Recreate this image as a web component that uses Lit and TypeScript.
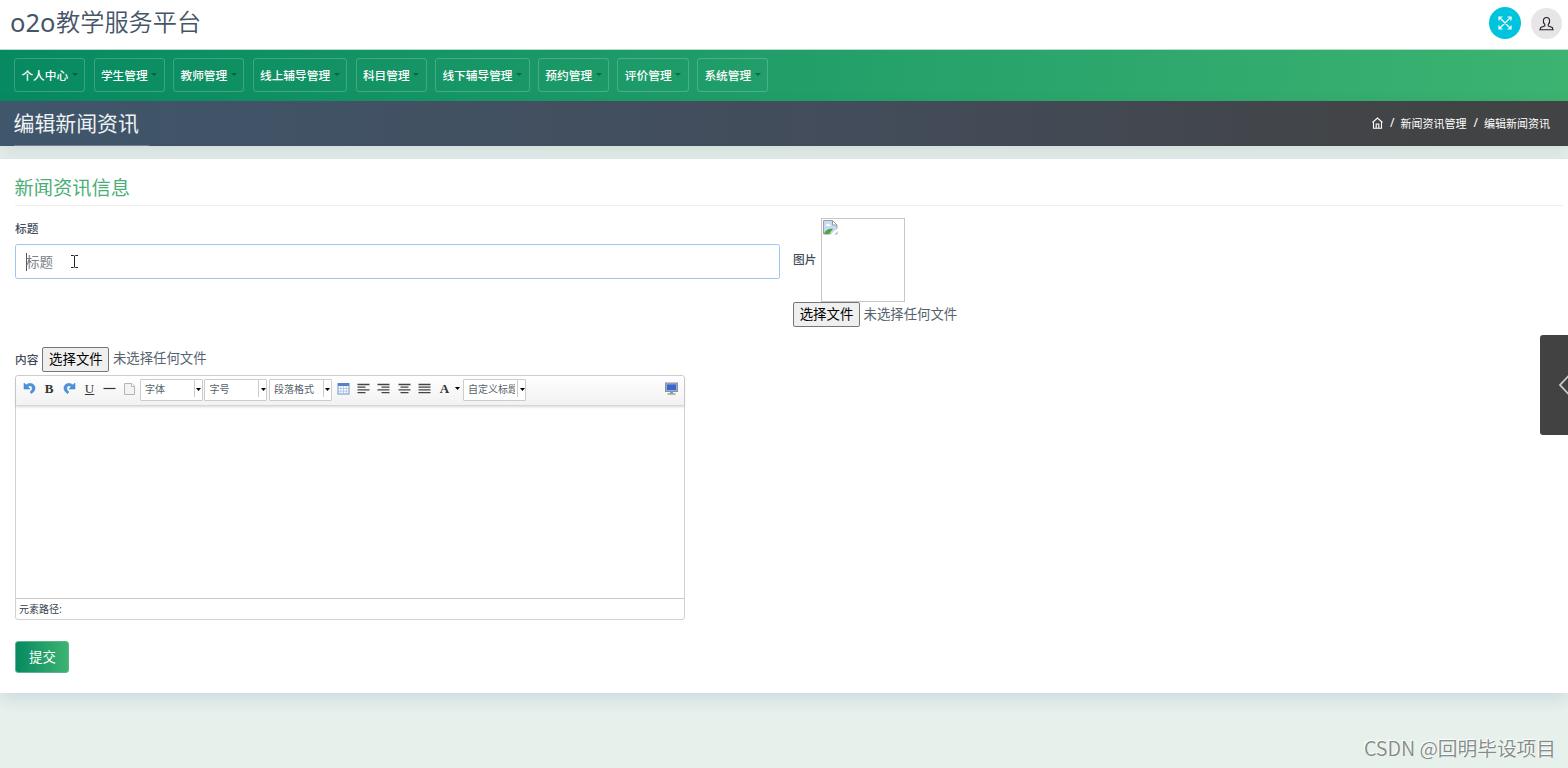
import { LitElement, html, css, svg } from "lit";
import { customElement, property } from "lit/decorators.js";

const menus = ["个人中心", "学生管理", "教师管理", "线上辅导管理", "科目管理", "线下辅导管理", "预约管理", "评价管理", "系统管理"];

const glyphs: Record<string, unknown> = {
  undo: svg`<path d="M2 2v6h6L5.800 5.800C8 4 10 4.500 10.200 7c.1 1.600-.8 3-2.200 4l1.500 1.500C12 11 13.200 9 13 6.600 12.600 2.500 7.500 1 4 4z" fill="#4c93db" stroke="#3478c0" stroke-width=".5"/>`,
  redo: svg`<path d="M13 2v6H7l2.200-2.200C7 4 5 4.500 4.800 7c-.1 1.600.8 3 2.200 4l-1.500 1.500C3 11 1.800 9 2 6.600 2.400 2.500 7.500 1 11 4z" fill="#4c93db" stroke="#3478c0" stroke-width=".5"/>`,
  rule: svg`<path d="M1.500 7.500h12" stroke="#333" stroke-width="1.200"/>`,
  page: svg`<path d="M2.500 2.500h7.500l2.500 2.500v8.500h-10z" fill="#f3f3f5" stroke="#b4b4ba"/><path d="M9.500 2.500V5.500h3" fill="#fff" stroke="#b4b4ba"/>`,
  table: svg`<rect x="2" y="2.500" width="11" height="10.500" fill="#fff" stroke="#6b8ec9"/><rect x="2" y="2" width="11" height="3" fill="#5580cc"/><path d="M2 7.500h11M2 10.200h11M4.800 5v8M7.500 5v8M10.200 5v8" stroke="#a9bfe3" stroke-width=".8"/>`,
  left: svg`<path d="M1.500 3.500h12M1.500 6.200h8M1.500 8.900h12M1.500 11.600h8" stroke="#444" stroke-width="1.300"/>`,
  right: svg`<path d="M1.500 3.500h12M5.500 6.200h8M1.500 8.900h12M5.500 11.600h8" stroke="#444" stroke-width="1.300"/>`,
  center: svg`<path d="M1.500 3.500h12M3.500 6.200h8M1.500 8.900h12M3.500 11.600h8" stroke="#444" stroke-width="1.300"/>`,
  justify: svg`<path d="M1.500 3.500h12M1.500 6.200h12M1.500 8.900h12M1.500 11.600h12" stroke="#444" stroke-width="1.300"/>`,
  screen: svg`<rect x="1.500" y="2" width="12" height="8.500" fill="#9cabc0" stroke="#8594aa"/><rect x="3" y="3.500" width="9" height="5.500" fill="#3767cf"/><path d="M6 11h3v1.500H6z" fill="#8e99a8"/><path d="M3.500 13h8" stroke="#8793a3" stroke-width="1.300"/>`,
};

@customElement("tool-icon")
class ToolIcon extends LitElement {
  @property() name = "";
  static styles = css`
    :host { display: block; width: 15px; height: 15px; flex: none; }
    svg { display: block; }
  `;
  render() {
    return html`<svg width="15" height="15" viewBox="0 0 15 15">${glyphs[this.name]}</svg>`;
  }
}

@customElement("tool-select")
class ToolSelect extends LitElement {
  @property() label = "";
  static styles = css`
    :host { display: flex; box-sizing: border-box; width: 63px; height: 22px; border: 1px solid #ccc; border-radius: 1px; background: #fff; flex: none; }
    .text { width: 47px; margin-left: 4px; overflow: hidden; white-space: nowrap; font-size: 10px; line-height: 18px; color: #555f6b; }
    .arrow { flex: 1; height: 17px; margin-left: 2px; border-left: 1px solid #ccc; display: flex; align-items: center; justify-content: center; }
    .arrow svg { display: block; margin: 3px 0 0 1px; }
  `;
  render() {
    return html`<span class="text">${this.label}</span><span class="arrow"><svg width="5" height="3"><path d="M0 0h5L2.500 3z"/></svg></span>`;
  }
}

@customElement("file-picker")
class FilePicker extends LitElement {
  static styles = css`
    :host { display: flex; align-items: center; font-size: 13.4px; color: #56636f; height: 25px; }
    .btn { box-sizing: border-box; width: 67px; height: 25px; padding: 0 0 1px; margin-right: 3.500px; border: 1px solid #767676; border-radius: 2px; background: #efefef; color: #000; font: inherit; line-height: 20px; white-space: nowrap; }
    .none { line-height: 23px; padding-bottom: 1px; }
  `;
  render() {
    return html`<button class="btn">选择文件</button><span class="none">未选择任何文件</span>`;
  }
}

@customElement("app-root")
class AppRoot extends LitElement {
  static styles = css`
    :host { display: block; position: relative; height: 768px; overflow: hidden; background: #e7f1ec; color: #455568; font-family: "Noto Sans", "Noto Sans CJK SC", sans-serif; }
    * { box-sizing: border-box; }
    .top { display: flex; align-items: center; justify-content: space-between; height: 50px; padding: 0 6px 0 10px; background: #fff; border-bottom: 1px solid #b9dccb; }
    .brand { display: flex; font-size: 24.2px; font-weight: 350; line-height: 36px; margin-top: -5px; }
    .latin { width: 46px; font-size: 25.500px; font-weight: 400; }
    .actions { display: flex; align-items: center; gap: 10px; margin-top: -3px; }
    .round { display: flex; align-items: center; justify-content: center; width: 31px; height: 31px; border-radius: 50%; background: #e7e5e8; }
    .cyan { width: 32px; height: 32px; background: #00c3dd; }
    .nav { display: flex; align-items: center; gap: 8.400px; height: 51px; padding: 0 0 1px 14px; background: linear-gradient(90deg, #078a61, #3cb371); }
    .item { display: flex; align-items: center; height: 34px; padding: 0 6.400px 2px; border: 1px solid rgba(255, 255, 255, .2); border-radius: 3px; font-size: 11.7px; font-weight: 500; color: #fff; white-space: nowrap; }
    .item svg { margin: 1px 0 0 3.600px; }
    .bar { display: flex; justify-content: space-between; height: 45px; padding: 0 18px 0 14px; background: linear-gradient(90deg, #40566b, #434b58 60%, #424344 92%, #424344); box-shadow: 0 3px 12px rgba(40, 70, 70, .13); color: #fff; }
    .heading { width: 135px; border-bottom: 1px solid #70808f; font-size: 20.900px; line-height: 45px; text-indent: -.5px; color: #eef3f3; white-space: nowrap; }
    .crumbs { display: flex; align-items: center; font-size: 11px; white-space: nowrap; padding-bottom: 2px; }
    .slash { margin: 0 6px 0 7px; font-size: 12px; }
    .card { height: 535px; margin-top: 12px; padding: 15px 5px 0 15px; background: #fff; border-top: 1px solid #dce7e5; box-shadow: 0 5px 18px rgba(90, 110, 170, .2); }
    .section { height: 32px; border-bottom: 1px solid #eee; font-size: 19.250px; line-height: 27px; text-indent: -.5px; color: #4bae79; }
    .grid { display: grid; grid-template-columns: 765px 1fr; column-gap: 13px; height: 140px; padding-top: 12px; }
    .label { font-size: 11.700px; font-weight: 500; line-height: 20px; padding-bottom: 2px; color: #3f4c5a; }
    .field { display: flex; align-items: center; height: 35px; margin-top: 4px; padding-left: 10px; border: 1px solid #9cc6ee; border-radius: 2.500px; font-size: 13.500px; color: #7b8186; }
    .hint { padding-bottom: 2px; }
    .caret { width: 1px; height: 18px; background: #555; margin-right: -1px; }
    .beam { margin-left: 17px; }
    .picrow { display: flex; align-items: center; gap: 4.500px; }
    .pic { width: 84px; height: 84px; padding: 1px; border: 1px solid #c6c6c6; }
    .content { display: flex; align-items: center; gap: 4px; height: 26px; }
    .content .label { padding-bottom: 0; }
    .editor { display: flex; flex-direction: column; width: 670px; height: 245px; margin-top: 3px; border: 1px solid #d2d2d4; border-radius: 3px; }
    .tools { display: flex; align-items: center; height: 30px; padding: 0 5px 2px 5.500px; background: linear-gradient(#fff, #f2f1f3); border-bottom: 1px solid #d6d6d8; box-shadow: 0 1px 3px rgba(0, 0, 0, .16); border-radius: 3px 3px 0 0; }
    .icons { display: flex; gap: 5.200px; margin-top: -3px; }
    .serif { width: 15px; text-align: center; font: bold 13px/15px "Liberation Serif", serif; color: #333; }
    .u { font-weight: 400; text-decoration: underline; }
    .selects { display: flex; gap: 1.500px; margin: 0 4px 0 2.500px; }
    .drop { margin: 6px 0 0 -2px; }
    .custom { margin-left: 3px; }
    .screen { margin-left: auto; margin-top: -3px; }
    .area { flex: 1; }
    .status { height: 21px; padding-left: 3px; border-top: 1px solid #c8c8c8; font-size: 10px; line-height: 20px; color: #333f4d; }
    .submit { display: block; width: 54px; height: 32px; margin: 21px 0 0 .4px; padding: 0 0 2px; border: 1px solid #58b78b; border-radius: 3px; background: linear-gradient(90deg, #078a61, #3cb371); color: #fff; font: 13.400px/28px "Noto Sans CJK SC", sans-serif; }
    .drawer { position: absolute; top: 335px; right: 0; width: 28px; height: 100px; border-radius: 3px 0 0 3px; background: #424242; }
    .mark { position: absolute; right: 12px; bottom: 5px; font-family: "Noto Sans CJK SC", sans-serif; font-size: 19.700px; font-weight: 350; line-height: 30px; color: #858b88; text-shadow: -1px -1px 0 #fff; white-space: nowrap; }
    svg { display: block; flex: none; }
  `;

  render() {
    return html`
      <header class="top">
        <div class="brand"><span class="latin">o2o</span><span>教学服务平台</span></div>
        <div class="actions">
          <div class="round cyan">
            <svg width="14" height="14" viewBox="0 0 14 14" fill="none" stroke="#fff" stroke-width="1.200"><path d="M1 1l12 12M13 1L1 13M1 4.500V1h3.500M9.500 1H13v3.500M13 9.500V13H9.500M4.500 13H1V9.500"/></svg>
          </div>
          <div class="round">
            <svg width="15" height="15" viewBox="0 0 15 15" fill="none" stroke="#222" stroke-width="1.100"><path d="M5.800 8.700C3.500 6.500 3.800 1.500 7.500 1.500s4 5 1.700 7.200v1.200l4 1.600.8 2.200H1l.8-2.200 4-1.600z"/></svg>
          </div>
        </div>
      </header>
      <nav class="nav">${menus.map((m) => html`<div class="item">${m}<svg width="6" height="3"><path d="M0 0h6L3 3z" fill="#00321e" fill-opacity=".5"/></svg></div>`)}</nav>
      <div class="bar">
        <div class="heading">编辑新闻资讯</div>
        <div class="crumbs">
          <svg width="11" height="12" viewBox="0 0 11 12" fill="none" stroke="#fff" stroke-width="1.100"><path d="M.5 5.500L5.500 1l5 4.500M1.500 5v6.300h8V5M4.200 11V7h2.600v4"/></svg>
          <span class="slash">/</span><span>新闻资讯管理</span><span class="slash">/</span><span>编辑新闻资讯</span>
        </div>
      </div>
      <main class="card">
        <div class="section">新闻资讯信息</div>
        <div class="grid">
          <div>
            <div class="label">标题</div>
            <div class="field">
              <span class="caret"></span><span class="hint">标题</span>
              <svg class="beam" width="9" height="15" viewBox="0 0 9 15" fill="none" stroke="#222"><path d="M1 1.500h2.500l1 .5 1-.5H8M1 13.500h2.500l1-.5 1 .5H8M4.500 2v11"/></svg>
            </div>
          </div>
          <div>
            <div class="picrow">
              <span class="label">图片</span>
              <div class="pic">
                <svg width="15" height="15" viewBox="0 0 15 15"><path d="M.5.500h9l4.500 4.500v9H.500z" fill="#c7daf5" stroke="#a0a0a0"/><path d="M3 5.500c0-2 3-2.500 3.500-.8 1.500-.2 1.700 1.300.8 1.300H3z" fill="#fff"/><path d="M1 14c1-4 5-6 9-5l-4 5z" fill="#4ea83c"/><path d="M7 15l8-7v3l-4 4z" fill="#fff"/><path d="M9.500.500v4.500H14z" fill="#fff" stroke="#999"/></svg>
              </div>
            </div>
            <file-picker></file-picker>
          </div>
        </div>
        <div class="content"><span class="label">内容</span><file-picker></file-picker></div>
        <div class="editor">
          <div class="tools">
            <div class="icons">
              <tool-icon name="undo"></tool-icon><span class="serif">B</span><tool-icon name="redo"></tool-icon><span class="serif u">U</span><tool-icon name="rule"></tool-icon><tool-icon name="page"></tool-icon>
            </div>
            <div class="selects">
              <tool-select label="字体"></tool-select><tool-select label="字号"></tool-select><tool-select label="段落格式"></tool-select>
            </div>
            <div class="icons">
              <tool-icon name="table"></tool-icon><tool-icon name="left"></tool-icon><tool-icon name="right"></tool-icon><tool-icon name="center"></tool-icon><tool-icon name="justify"></tool-icon><span class="serif">A</span><svg class="drop" width="5" height="3"><path d="M0 0h5L2.500 3z"/></svg>
            </div>
            <tool-select class="custom" label="自定义标题"></tool-select>
            <tool-icon class="screen" name="screen"></tool-icon>
          </div>
          <div class="area"></div>
          <div class="status">元素路径:</div>
        </div>
        <button class="submit">提交</button>
      </main>
      <aside class="drawer">
        <svg width="28" height="100" viewBox="0 0 28 100" fill="none" stroke="#ccc" stroke-width="1.800"><path d="M29 40.500L20 50l9 9.500"/></svg>
      </aside>
      <div class="mark">CSDN @回明毕设项目</div>
    `;
  }
}
